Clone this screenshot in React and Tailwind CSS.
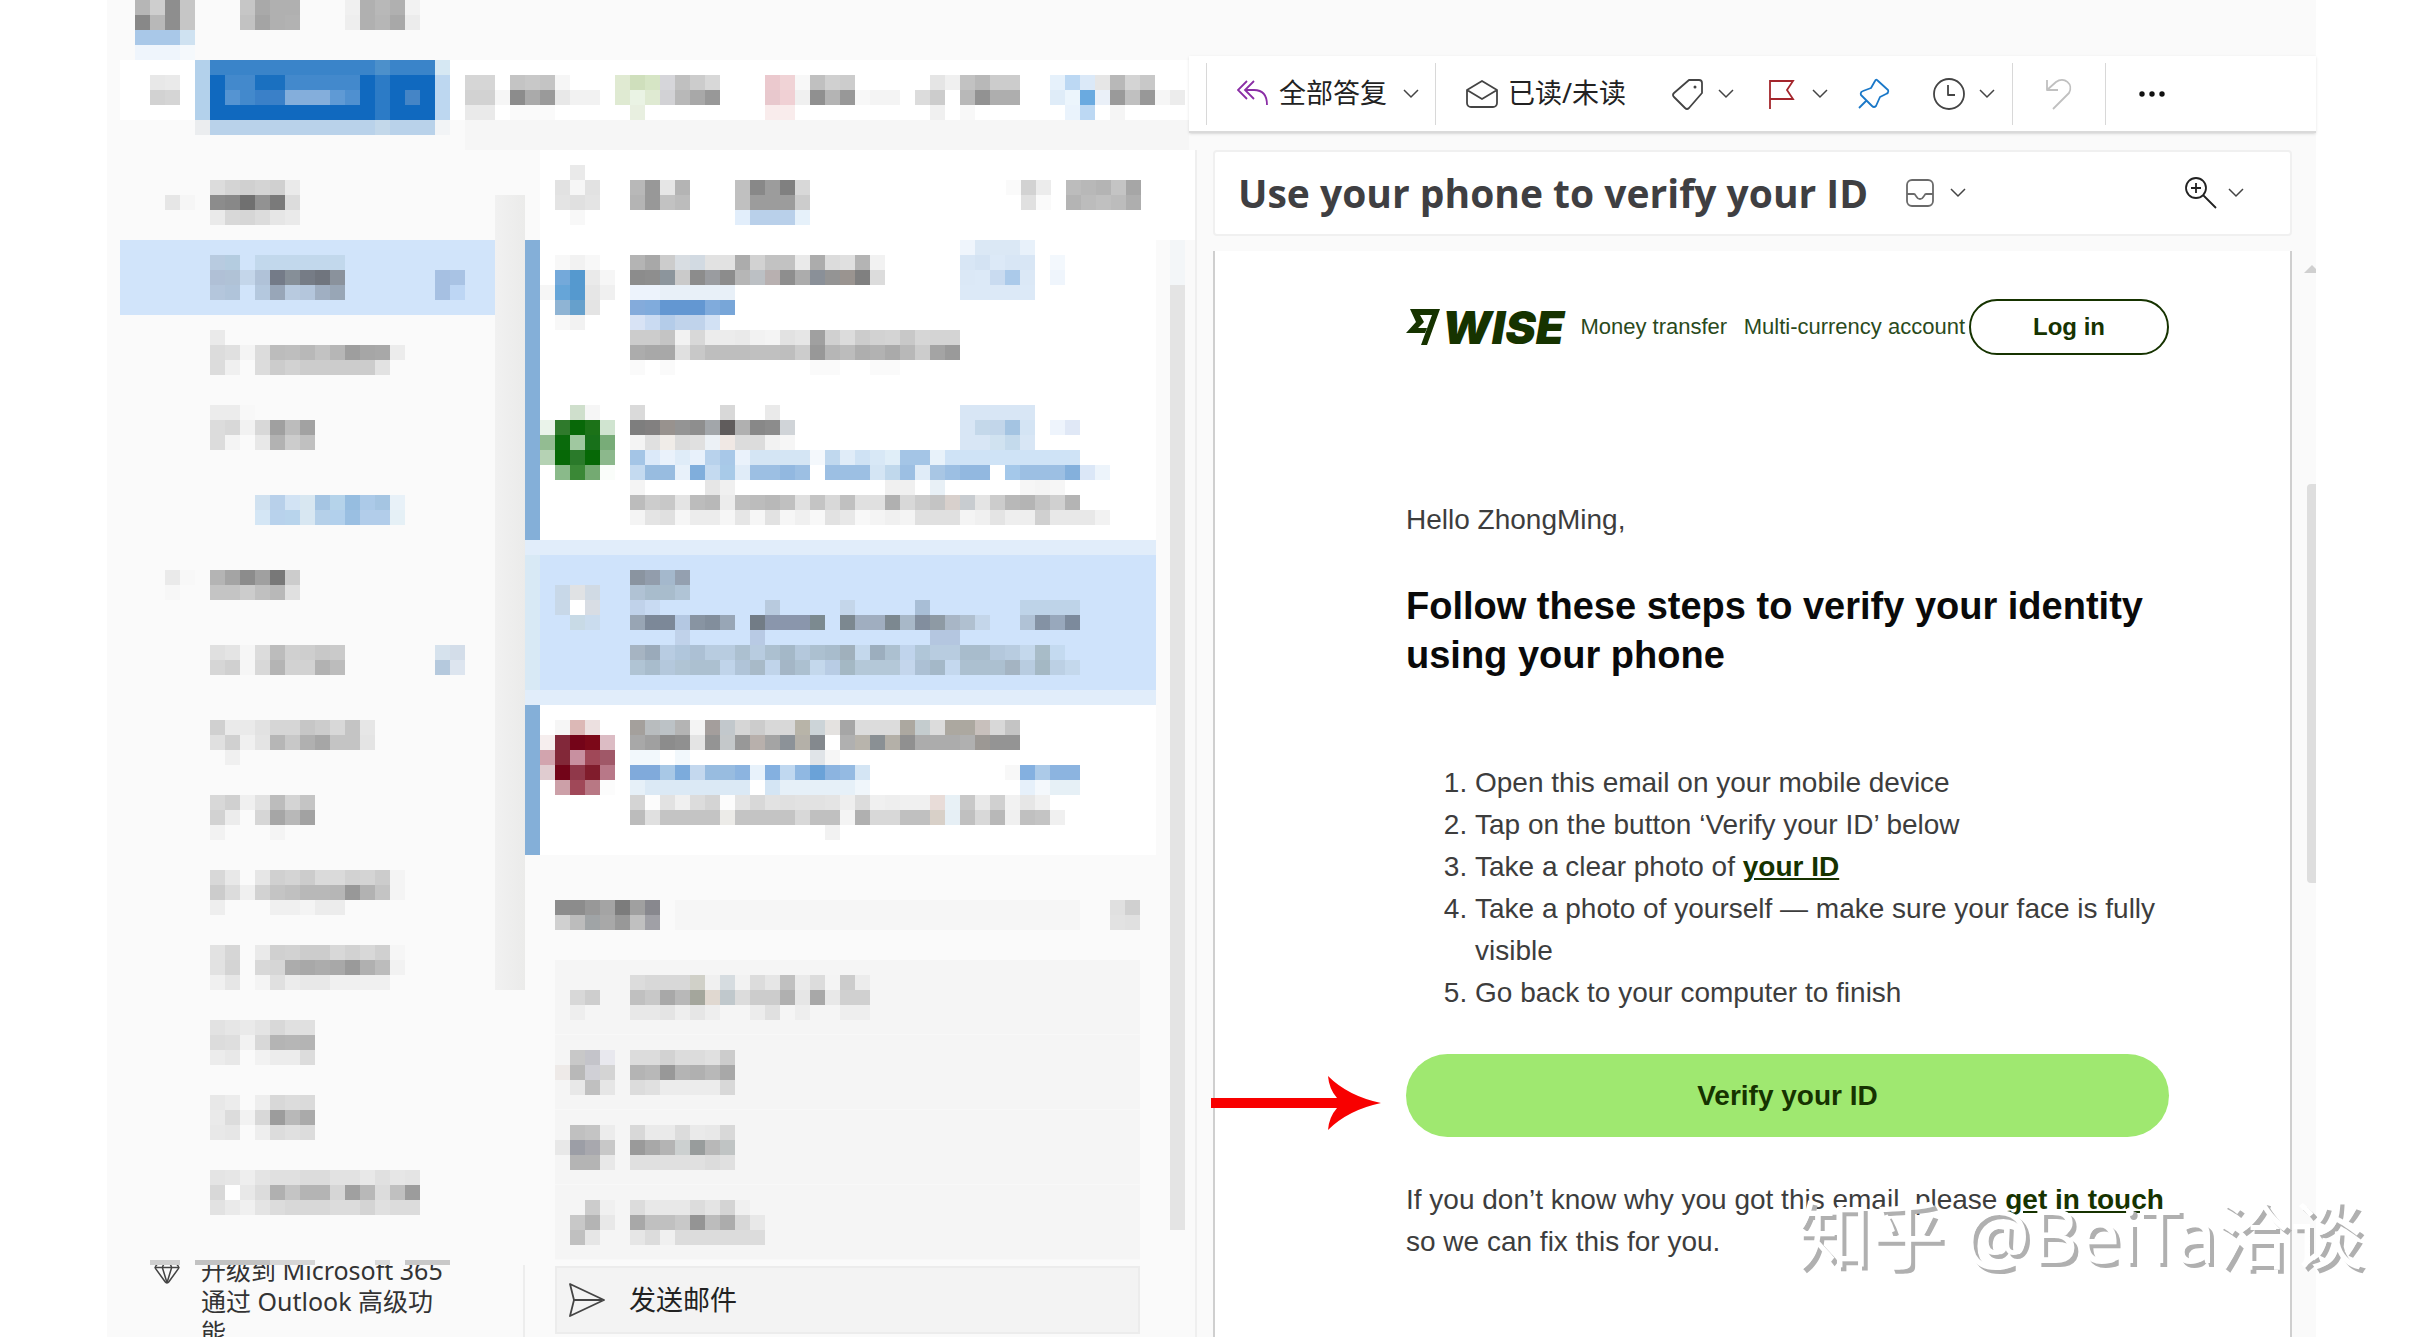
import React from 'react'
import { Gem } from 'lucide-react'

const CELL = 15

// Each row is a list of cells: "." is empty, two hex digits are a grey, six are a colour, "*n" repeats.
function parseRow(row) {
  return row
    .split(' ')
    .filter(Boolean)
    .flatMap((token) => {
      const [value, times] = token.split('*')
      return Array(Number(times || 1)).fill(value)
    })
}

function toColor(value) {
  return value.length === 2 ? `#${value}${value}${value}` : `#${value}`
}

function Mosaic({ rows, className = '' }) {
  const grid = rows.map(parseRow)
  const cols = Math.max(...grid.map((r) => r.length))
  return (
    <svg
      className={`shrink-0 ${className}`}
      width={cols * CELL}
      height={rows.length * CELL}
      shapeRendering="crispEdges"
      aria-hidden="true"
    >
      {grid.map((row, y) =>
        row.map((value, x) =>
          value === '.' ? null : (
            <rect key={`${x}-${y}`} x={x * CELL} y={y * CELL} width={CELL} height={CELL} fill={toColor(value)} />
          )
        )
      )}
    </svg>
  )
}

const tabs = [
  ['b6 ce 8e c6', '88 b8 8e c6', 'a9c8e8*3 cfe2f1', 'eff5fc*3 f5f9fc'],
  ['c6 a9 b0 b0', 'c2 a4 b0 b2'],
  ['f0 b0 b8 b0 f2', 'ee b0 b6 a8 ec'],
]

const newMail = [
  'b3d1eb 3a84c9*11 4c90cb 3a84c9*3 d6e8f3',
  'b3d1eb 1069bf 4389cc*2 1a70c0*2 4389cc*5 1069bf 2c7bc6 1069bf*3 bdd7f0',
  'b3d1eb 1069bf 5594d2 4389cc 3a80c8*2 84aedb*3 5f9ad5 4f90d0 1069bf 2c7bc6 1069bf 4585c6 1069bf bdd7f0',
  'b3d1eb 1069bf*11 2c7bc6 1069bf*3 bdd7f0',
  'ebedef b9d2ea*11 c3d8ea b9d2ea*3 f2f4f6',
]

const ribbon = [
  ['.*10', 'd6 d6 . c4 c8 c4 f6', 'd2 d2 f6 8c aa 9a e8 f2 f2', 'ea ea . fa fa fa'],
  ['.*10', 'e0ead2 cfdfbc d6e5c5 d6d6da c0 cc d8', 'dfead2 eaf3e4 dfead2 d2d2d5 b8 a8 98', '. e8efe0'],
  ['.*10', 'ebc9ce f0d3d6 f8 c0 d0 cc', 'e8c8cd f0d0d4 f0 90 b4 98 f8 f4 f4', 'f9ecec*2'],
  ['.*9', '. e5 f0 c2 b8 cc cc', 'dc cc . b8 92 ae ae', '. f0 . f8'],
  ['.*9', 'e6f1fb bcd8f3 dbe9f8 e6 b8 d4 c8', 'dfecf8 ecf5fc 6aaae0 eaf0f8 9a c0 98 f6 ec', '. eaf3fc bcd8f3 . f5'],
]

const folders = [
  { rows: ['.', '.*3 dc d4 d0 d4 d0 ea', 'e6 f6 . 8c 88 70 92 7a dc', '.*3 ea d8 d6 dc e6 ea'] },
  {
    selected: true,
    rows: [
      '.',
      '.*3 b8cbe0 b4cce0 . c2d8ec*6',
      '.*3 b0c0d6 b0c2d6 c4d6ea b0c2d8 747b88 868f98 767c86 70757e 8a929c .*6 a6c0e2 a9c3e4',
      '.*3 b4c6dc b0c4da . b4c8de 98a6b8 b8cadf b4c6dc a0afc2 98a6b6 .*6 a6c0e2 bdd6f4',
    ],
  },
  { rows: ['.', '.*3 ea', '.*3 dc e0 f4 dc bc be b8 c2 b6 9e a6 a8 ec', '.*3 dc f0 . dc cc d2 cc*5 e2'] },
  { rows: ['.', '.*3 ec ec f8', '.*3 dc d8 f2 d8 a0 bc a2', '.*3 dc f4 . e8 b2 cc c0'] },
  {
    rows: [
      '.',
      '.',
      '.*6 d0e1f0 b8d0ea d2e3f4 d8e7f1 a5c5e3 b5d3ea 96bde0 accae8 a5c5e2 e8f1f8',
      '.*6 d4e6f5 b8d2ec b8d4ec d8e7f2 b5d0e9 b2d0ec 9abfe2 b2cdea*2 e5f0f6',
    ],
  },
  { rows: ['.', '.', 'ea f8 . b4 a4 8c a0 78 cc', 'f7 . . c4 c4 cc c0 b8 e0'] },
  {
    rows: [
      '.',
      '.',
      '.*3 e0 e4 f6 dc bc d0 ce c8 ca .*6 d6e2ed d3dde9',
      '.*3 d6 d0 f6 d8 b4 d2 d2 b2 bc .*6 b5c9dd dde5ef',
    ],
  },
  { rows: ['.', '.', '.*3 d0 ea ea e2 d6 d6 c6 cc d8 c4 e6', '.*3 e0 d0 f0 e4 b6 c8 b0 a6 c4 c4 e4', '.*4 f0'] },
  { rows: ['.', '.', '.*3 d8 d0 f0 e2 bc d4 c4', '.*3 d2 ec . d6 a6 b8 a2', '.*3 f2 .*3 f4'] },
  {
    rows: [
      '.',
      '.',
      '.*3 d8 e8 . e6 d0 d4 cc da da d2 d4 cc f4',
      '.*3 cc dc f0 d2 c4 c0 b8 b8 b6 98 b2 c4 f4',
      '.*3 ee .*3 f0 f0 f4 ec ec',
    ],
  },
  {
    rows: [
      '.',
      '.',
      '.*3 e2 d6 . ea d0 d2 cc cc d8 d2 d8 d0 f6',
      '.*3 e2 d4 . d8 d6 ac a8 ac a8 9a b0 bc f2',
      '.*3 f0 e6 . f4 e0 ec e8*2 f0*4',
    ],
  },
  { rows: ['.', '.', '.*3 e2 e6 ea e4 d8 e0 e0', '.*3 dc de f2 d8 b4 b6 b4', '.*3 ec e8 . f2 ec ec dc'] },
  { rows: ['.', '.', '.*3 e8 ec . ee d8 dc da', '.*3 ea dc f2 d8 9c b8 aa', '.*3 e8 e6 . ee dc e0 dc'] },
  {
    rows: [
      '.',
      '.',
      '.*3 e4 e6 ee e4 e0 e0 dc dc e2 e2 e8 e0 e6 e4',
      '.*3 d8 fe e8 dc b0 c4 b4 b4 d6 a0 b8 dc c0 9c',
      '.*3 e2 ea f0 e4 dc d8*3 dc dc d4 e0 dc dc',
    ],
  },
]

const messages = [
  {
    avatar: [
      '.*5',
      '. f8 f2 f8',
      '. 74a9da 5599cf ea f6',
      'f6 66a5d8 5599cf e6 f0',
      '. 8fb4d4 66a0cc e4',
      '. f8 f2',
    ],
    body: [
      '.*22 eff5fc dbe8f5*3 e8f1fa',
      'b4 a8 cc d8dde2 d2dae2 e2 e2 ac d2 c2 c2 ea ac dc e0 b4 f2 .*5 d8e6f5 d4e3f3 dce9f7 d8e6f5*2 . f3f8fd',
      '8c 8e 8c959c ca 8c 9a9ca0 8c b6 bcc0c4 b8b0b0 8e ac 8a9098 94 9a9490 80 dc .*5 dbe8f6 dce9f7 c9dbf0 abcaea dbe8f6 . eff5fc',
      'edf3fc*2 e8f0f8*5 .*15 dce9f7*5',
      '84abdb 80abdc 6397d2*3 80abdc 78a6d8',
      'd8e3f5 cadbf2 b4cce9 c0d3eb*2 d2e1f4',
      'cc cc c4 f2 d8 ec ec ea f2 f4 e2 e6 a0 d0 dc cc d2 d4 c8 d6 d4 d4',
      'ac a8 a8 e0 c8 be be be c0 c0 be cc 98 b6 bc ae b2 aa b8 cc a4 9a',
      'fa . fa .*9 fa fa . . fa fa',
    ],
  },
  {
    avatar: [
      '.*5',
      '. . cfdfcc f6',
      'eaf3ea 2f7a2c 086808 1c7218 d0e4d0',
      '93bc92 0a6a0c a0c8a0 18701a 78ac78',
      'b5d2b4 066806 2a7a2a 066806 8cb88c',
      '. 8aba8a 3a8836 74aa72 fafdfa',
    ],
    body: [
      '.',
      'da .*5 d8 .*2 ea .*12 d8e6f5*5',
      '7e 828080 98928e 949494 8e8e8e a2a6aa 605c5c b0 88 8c d0d4d8 .*11 d8e6f5 c4d8ea c2d6ea a4c4e2 d4e4f4 . eef4fc e0e8f6',
      'f4 e0 f0ece8 dc e0 ecf1f6 f0e8e4 dc*2 f2 f6 .*11 d8e6f5*2 d0e2f0 c4daec d8e6f5',
      'a4c5e6 dbe9f9 eaf2fb dfecf8 e8f1fb b8d2ec a8c8e8 eaf2fb d4e5f4*4 f4f8fc c0d8ee e0ecf8 cfe2f4 d8e8f6 e0eef8 a4c5e6*2 e8f2fa cfe3f6*9',
      'c4daf0 98bce0*2 e8f1fa 80aedc c4daf0 a8cae8 e0ecf8 9cbfe3*2 92b8e0 9cbfe3 . 9cbfe3*3 d4e5f4 c0d8ec 9cbfe3 e0ecf8 a8c6e4 9cbfe3 92b8e0*2 . a4c8ea 9cbfe3*3 84b0dc dbe7f7 edf4fb',
      'f4 .*4 e6 f0 .*10 f0*2 . e8f0f6 .*5 f6 f4 f6',
      'bc cc c8 e4 bc b8 ec c0 bc b8 c0 e0 c4 d8 c0 e0 e0 b0 d8 cc c4 d8d0cc c8ccd0 e4 cc b8 b4 c4 d0 b4',
      'f4 e4 e0 f6 ec ec f6 e6 f6 e2 f6 f0 f8 e2 e8 f8 f4 f0 f4 e0*3 f4 f0 e4 ee ee d0 e8 e8 e8 f2',
    ],
  },
  {
    selected: true,
    avatar: ['.*5', '.', '.', '. c8d8e8 e0e2e4 d0dae4', '. c8d8e8 ffffff d8dde4', '. . c8dae6 cadcee'],
    body: [
      '.',
      '.',
      '8a94a0 929dac a4b8cc 94a0b0',
      'b0c2d4 a8bccc*2 b0c4d6',
      'c0d2ea c8daf2 .*7 b8cade .*4 c4d6ea .*4 a8bed6 .*6 bed3e8*4',
      '98a5b4 7c8898*2 b4c8e2 8894a2 828e9c 98a6b6 . 727c86 8a96ac*3 7c8a90 . 7c8890 a0aec0*2 7c8890 a8b8c8 828e9e 8e9aa4 a8b6c6 b0c0d0 c4d6ea .*2 b0c2d6 8492a4 98a8bc 7c8a9c',
      '.*3 c0d2ea .*4 b8cae4 .*11 b4c6e0*2',
      'a6b4c2 9aaaba b8cce2 b0c6dc acc0d4 b8cce0 b8cce0 acc0d0 b8cce0 acc0d0 a4b8c8 b4c8dc acc0d0 a8bccc a0b0bc c4d8ec 9caebe acc0d0 c0d4ec b0c6d8 b8cce0 b8cce0 a8bccc*2 b4c8dc b8cce0 c4d8ec a8bcc8 c4daf0',
      'b0c4d4 a8bccc b4c8dc b0c4d4 acc0d0*2 c0d4ea b0c4d8 a8bac8 c0d4ea a4b6c6 acc0d0 c4d8ec b8cce4 a4b8c4 b4c8d8*3 c4d6ec acc0d4 a4b8c8 c4d8ee acc0d0*3 a4b4c2 b8cce0 a4b8c4 bcd0e4 c4d8ec',
    ],
  },
  {
    avatar: [
      '.*5',
      '. f6 dcb8b6 ece0e0',
      'f6eeee 82283a 740418 7c0818 dcbcc4',
      'd2a4ae 822838 c890a0 a04858 a05868',
      'e0ccd0 720418 90384a 801c2c b87888',
      '. cca0a8 a04858 b87884 fc',
    ],
    body: [
      '.',
      'a4a09c b8bcbe bcc2c6 b4 f4 a49e9c c2c8cc d6 cc d8*2 b8b4a8 ccd4d8 e4e2e0 a6 dc*3 aca8a0 c4ccce dc aca8a0*2 c8c0bc d8 c4',
      'a8 a0 8c 90 e4 94 c4c8ca 98 b8b0ac a4 8c9298 b4b0a8 84898e . b0 b8b4ac 8a9094 b4b0a8 90 ac*3 b0 9c9894 94*2',
      'f2f8fc*2 . f2f8fc .*8 e0e4e8 f6',
      '80aadb*2 a8c8e6 7cabdc c4d8ee 98bce0*2 8cb4e0 e8f2fb 84b0e0 c0d8f0 90b8e2 6aa2d8 8cb4e0 94bae2 d4e5f4 .*9 f8 84b0e0 accae8 8cb4e0*2',
      'e6f0f8 dbe9f5*7 . d4e5f4 e6f0f8*5 f0f6fb .*10 e6f0fa f4f8fc e6f0f6*2',
      'd4 fc e2 f0 dc d4 fc e4 d8 e2 e0 e2*2 e4 ee dc f0 ee f0 f0 e8dcd8 e8f1f6 c8 e8 d0 f2 e6 f0',
      'bc e0 c4*4 ecebe8 c4*4 d8 c0*2 f4 b0 d8*2 c0*2 d8d0c8 e6eff5 c0 d8 b8 f0 c0 c4 f0',
      '.*13 f2',
    ],
  },
]

const tips = [
  [
    '.',
    '.*5 dc d8*3 d0d0c8 f0 d6dce0 f2 dc e6 c0 ea dc f4 cc ec',
    '. d8 ce .*2 c0 c8 a8 b8 a4a69c e0d8d0 c0c8cc dc cc cc b0 e6 a8 e8 d0 d0',
    '. ee .*3 e8 e8 e4 ee e6 ee .*2 ec e0 . ee .*2 ee ee',
  ],
  [
    '.',
    '. c8 c4c4ca e8e8ee . dc dc d2 dc dc e0 cc',
    'eeeae8 b8 d0d0d6 d4 . b4 b8 98 b4 b0 b8 a8',
    '. e8 c0 e6 . dc e0 ec*4 d8',
  ],
  [
    '.',
    '. c0 c4 ec . d8 ea ea dc ea e8 d8',
    'e8 9c9ea6 a8a8ae c8 . 9a a8 b4 ccd0d0 989c9c b8 c0c4c4',
    '. b4 b4 e8 . e0*5 dc e0',
  ],
  [
    '.',
    '. . cc f0 . dc e8*3 dc e4 d4 f0',
    '. c8 b4 e8 . a8 c0 c0 c8 94 bc ac d8 e8',
    '. c0 e6 . . e6 dc f0 dc*6',
  ],
]

function Chevron() {
  return (
    <svg className="shrink-0" width="16" height="10" viewBox="0 0 16 10" fill="none" stroke="#444" strokeWidth="1.5">
      <path d="M1 1l7 7 7-7" />
    </svg>
  )
}

function Icon({ children, color = '#444', width = 32, height = 32 }) {
  return (
    <svg
      className="shrink-0"
      width={width}
      height={height}
      viewBox={`0 0 ${width} ${height}`}
      fill="none"
      stroke={color}
      strokeWidth="1.8"
      strokeLinejoin="round"
    >
      {children}
    </svg>
  )
}

function Divider() {
  return <div className="h-[62px] w-px shrink-0 bg-[#d8d8d8]" />
}

function Toolbar() {
  return (
    <div className="flex h-[77px] min-w-0 flex-1 items-center border-b-2 border-[#dadada] bg-white pl-[17px] text-[27px] text-[#222] shadow-sm">
      <Divider />
      <button className="ml-[30px] flex items-center">
        <Icon color="#8a2da5">
          <path d="M10 3L1 12l9 9M17 3l-9 9 9 9M8 12h9c8 0 13 5 13 15" strokeLinejoin="miter" />
        </Icon>
        <span className="ml-[10px] mr-4">全部答复</span>
        <Chevron />
      </button>
      <div className="ml-4">
        <Divider />
      </div>
      <button className="ml-[30px] flex items-center">
        <Icon>
          <path d="M1 12L16 3l15 9v13a4 4 0 0 1-4 4H5a4 4 0 0 1-4-4zM1 12l15 9 15-9" />
        </Icon>
        <span className="ml-[10px]">已读/未读</span>
      </button>
      <button aria-label="标记" className="ml-[46px] flex items-center gap-[14px]">
        <Icon>
          <path d="M17 2h10a3 3 0 0 1 3 3v10L17 30q-2 2-4 0L2 19q-2-2 0-4z" />
          <circle cx="23" cy="9" r="1.5" fill="#444" stroke="none" />
        </Icon>
        <Chevron />
      </button>
      <button aria-label="旗标" className="ml-8 flex items-center gap-[14px]">
        <Icon color="#a4262c">
          <path d="M4 31V3h23l-6 9 6 9H4" strokeLinejoin="miter" />
        </Icon>
        <Chevron />
      </button>
      <button aria-label="固定" className="ml-[30px]">
        <Icon color="#1a78c8">
          <path d="M19 2l11 10q1 3-2 4l-6 3-4 9q-2 2-4 0L3 17q-1-3 2-4l8-3 4-7q1-2 2-1zM9 22l-8 8" />
        </Icon>
      </button>
      <button aria-label="推迟" className="ml-[43px] flex items-center gap-[14px]">
        <Icon>
          <circle cx="16" cy="16" r="15" />
          <path d="M15 7v10h7" />
        </Icon>
        <Chevron />
      </button>
      <div className="ml-[17px]">
        <Divider />
      </div>
      <button aria-label="撤消" className="ml-[31px]">
        <Icon color="#c0c0c0">
          <path d="M3 2v10h11M3 12l9-8c8-6 18 2 13 11L9 31" />
        </Icon>
      </button>
      <div className="ml-[29px]">
        <Divider />
      </div>
      <button aria-label="更多" className="ml-[33px]">
        <svg width="26" height="6" viewBox="0 0 26 6" fill="#111">
          <circle cx="3" cy="3" r="2.7" />
          <circle cx="13" cy="3" r="2.7" />
          <circle cx="23" cy="3" r="2.7" />
        </svg>
      </button>
    </div>
  )
}

function Sidebar() {
  return (
    <aside className="flex w-[418px] shrink-0 flex-col">
      <div className="flex pt-[15px]">
        <nav className="flex-1 pl-[13px]">
          {folders.map((folder, i) => (
            <div
              key={i}
              className={folder.selected ? 'h-[75px] bg-[#d1e4fa] pl-[45px]' : 'h-[75px] pl-[45px]'}
            >
              <Mosaic rows={folder.rows} />
            </div>
          ))}
        </nav>
        <div className="w-[30px] pt-[30px]">
          <div className="h-[795px] bg-gradient-to-r from-[#f1f1f1] to-[#ebebea]" />
        </div>
      </div>
      <div className="mt-[45px] flex h-[5px] shrink-0 gap-[15px] pl-[43px]">
        <div className="w-[30px] bg-[#cfcfcf]" />
        <div className="w-[75px] bg-[#c2c2c2]" />
        <div className="-ml-[15px] w-[45px] bg-[#d6d6d6]" />
        <div className="ml-[45px] w-[15px] bg-[#dadada]" />
        <div className="w-[45px] bg-[#c8c8c8]" />
      </div>
      <div className="flex flex-1 items-start overflow-hidden border-r-2 border-[#ededed] pl-[46px]">
        <Gem className="-mt-2 shrink-0 text-[#444]" size={28} strokeWidth={1.3} />
        <a href="#upgrade" className="-mt-[10px] ml-5 w-[248px] text-[25px] leading-[31px] text-[#333]">
          升级到 Microsoft 365 通过 Outlook 高级功能
        </a>
      </div>
    </aside>
  )
}

function Message({ message }) {
  if (message.selected) {
    return (
      <li className="flex h-[165px] border-y-[15px] border-[#e1edfa] bg-[#cfe3fb]">
        <div className="w-[15px] shrink-0 bg-[#d8e9f5]" />
        <Mosaic rows={message.avatar} className="-mt-[15px]" />
        <Mosaic rows={message.body} className="-mt-[15px] ml-[15px]" />
      </li>
    )
  }
  return (
    <li className="flex h-[150px] bg-white">
      <div className="w-[15px] shrink-0 bg-[#84afd8]" />
      <Mosaic rows={message.avatar} />
      <Mosaic rows={message.body} className="ml-[15px]" />
    </li>
  )
}

function MessageList() {
  return (
    <section className="flex w-[672px] shrink-0 flex-col border-r-2 border-[#efefef]">
      <header className="ml-[15px] flex h-[90px] shrink-0 items-start bg-white pl-[15px] pr-[54px] pt-[15px]">
        <Mosaic rows={['. ea', 'e2 f6 e2', 'e4 e0 e4', '. f8']} />
        <Mosaic rows={['.*4', 'b8 98 e6 b4', 'b4 98 c2 bc']} className="ml-[30px]" />
        <Mosaic
          rows={['.*5', 'c0 88 9c 80 d8', 'c0 9c*3 cc', 'e2eefb b9d0ea*3 e6f1fa']}
          className="ml-[45px]"
        />
        <Mosaic rows={['.', 'fa d2 ec . bc b8 b4 c4 a6', '. e0 fa . b4 bc c0 bc ae']} className="ml-auto" />
      </header>
      <div className="flex min-h-0 flex-1">
        <div className="flex-1">
          <ul>
            {messages.map((message, i) => (
              <Message key={i} message={message} />
            ))}
          </ul>
          <div className="pl-[30px] pr-4">
            <div className="flex items-center justify-between py-[45px]">
              <Mosaic rows={['8c*2 98 a4 7c a0 88888e', 'd0 bc a0a4a6 a8 98 c0 a0a0a6']} />
              <div className="ml-[15px] mr-[30px] h-[30px] flex-1 bg-[#f6f6f6]" />
              <Mosaic rows={['e0 d0', 'e2 e0']} />
            </div>
            <div className="mt-[-15px] bg-[#f5f5f5]">
              {tips.map((rows, i) => (
                <div key={i} className="h-[75px] border-b border-[#f8f8f8]">
                  <Mosaic rows={rows} />
                </div>
              ))}
            </div>
            <button className="mt-[6px] flex h-[68px] w-full items-center border-2 border-[#ececec] bg-[#f3f3f3] pl-3 text-[27px] text-[#222]">
              <Icon width={36} height={34}>
                <path d="M1 1l34 16L1 33l4-16zM5 17h28" />
              </Icon>
              <span className="ml-6">发送邮件</span>
            </button>
          </div>
        </div>
        <div className="w-[39px] pl-[14px]">
          <div className="h-[45px] w-[15px] bg-[#f3f6f8]" />
          <div className="h-[945px] w-[15px] bg-[#e4e4e4]" />
        </div>
      </div>
    </section>
  )
}

function WiseLogo() {
  return (
    <a href="#wise" aria-label="Wise" className="flex shrink-0 items-center text-[#163300]">
      <svg width="34" height="36" viewBox="0 0 34 36" fill="#163300">
        <path d="M4 0h30L21 36h-6L26 6H14l4 7-6 6h9l-2 5H0l10-11z" />
      </svg>
      <span className="ml-[2px] font-['Inter','Liberation_Sans',sans-serif] text-[46px] font-black italic leading-9">
        WISE
      </span>
    </a>
  )
}

function Email() {
  return (
    <article className="relative flex-1 border-x-2 border-[#cfcfcf] bg-white pl-[191px] pr-[121px] font-['Liberation_Sans',Arial,sans-serif] text-[28px] leading-[42px] text-[#3d3d3d]">
      <header className="flex items-center pt-12">
        <WiseLogo />
        <nav className="flex flex-1 items-center justify-between whitespace-nowrap pl-4 text-[22px] text-[#2a4a1c]">
          <a href="#transfer">Money transfer</a>
          <a href="#account" className="pr-1">
            Multi-currency account
          </a>
        </nav>
        <a
          href="#login"
          className="flex h-14 w-[200px] shrink-0 items-center justify-center rounded-full border-2 border-[#163300] text-[24px] font-bold text-[#163300]"
        >
          Log in
        </a>
      </header>
      <p className="mt-36">Hello ZhongMing,</p>
      <h2 className="mt-[41px] text-[38px] font-bold leading-[49px] text-[#0a0a0a]">
        Follow these steps to verify your identity using your phone
      </h2>
      <ol className="mt-[82px] list-decimal pl-[69px]">
        <li>Open this email on your mobile device</li>
        <li>Tap on the button ‘Verify your ID’ below</li>
        <li>
          Take a clear photo of{' '}
          <a href="#id" className="font-bold text-[#163300] underline">
            your ID
          </a>
        </li>
        <li>Take a photo of yourself — make sure your face is fully visible</li>
        <li>Go back to your computer to finish</li>
      </ol>
      <div className="relative mt-10">
        <svg
          className="absolute -left-[195px] top-[22px]"
          width="170"
          height="54"
          viewBox="0 0 170 54"
          fill="#f80000"
        >
          <path d="M0 22h126Q118 13 117 0q20 20 53 27-33 7-53 27 1-13 9-22H0z" />
        </svg>
        <a
          href="#verify"
          className="flex h-[83px] items-center justify-center rounded-full bg-[#9fe870] font-bold text-[#163300]"
        >
          Verify your ID
        </a>
      </div>
      <p className="mt-[42px]">
        If you don’t know why you got this email, please{' '}
        <a href="#help" className="font-bold text-[#163300] underline">
          get in touch
        </a>{' '}
        so we can fix this for you.
      </p>
    </article>
  )
}

function ReadingPane() {
  return (
    <main className="ml-4 flex min-w-0 flex-1 flex-col">
      <header className="mr-6 flex h-[86px] shrink-0 items-center rounded border-2 border-[#f0f0f0] bg-white pl-[23px] pr-[46px]">
        <h1 className="font-['Open_Sans','Noto_Sans',sans-serif] text-[39px] font-bold text-[#3f3f42]">
          Use your phone to verify your ID
        </h1>
        <button aria-label="移动" className="ml-[38px] flex items-center gap-4">
          <Icon color="#6a6a6a" width={28} height={28}>
            <rect x="1" y="1" width="26" height="26" rx="5" />
            <path d="M1 15h7c2 0 2 5 6 5s4-5 6-5h7" />
          </Icon>
          <Chevron />
        </button>
        <button aria-label="缩放" className="ml-auto flex items-center gap-[11px]">
          <Icon color="#222">
            <circle cx="11" cy="11" r="10" />
            <path d="M11 6v10M6 11h10M18 18l13 13" />
          </Icon>
          <Chevron />
        </button>
      </header>
      <div className="mt-[15px] flex min-h-0 flex-1">
        <Email />
        <div className="flex w-6 shrink-0 flex-col items-end pt-[14px]">
          <svg width="12" height="8" viewBox="0 0 12 8" fill="#d0d0d0">
            <path d="M0 8l8-8 4 4v4z" />
          </svg>
          <div className="mt-[211px] h-[399px] w-[9px] rounded-l bg-[#dedede]" />
        </div>
      </div>
    </main>
  )
}

function App() {
  return (
    <div className="relative h-screen overflow-hidden bg-white pl-[107px] pr-[110px] font-['Noto_Sans','Noto_Sans_CJK_SC',sans-serif]">
      <div className="flex h-full flex-col bg-[#fafafa]">
        <div className="flex h-14 shrink-0 items-start pl-7">
          <Mosaic rows={tabs[0]} />
          <Mosaic rows={tabs[1]} className="ml-[45px]" />
          <Mosaic rows={tabs[2]} className="ml-[45px]" />
        </div>
        <div className="flex h-[94px] shrink-0 items-start">
          <div className="w-[1082px] shrink-0 pt-1">
            <div className="ml-[13px] flex h-[60px] items-start bg-white pl-[30px]">
              <Mosaic rows={['.*3', 'e8 ea', 'd2 d5']} />
              <button aria-label="新邮件" className="shrink-0">
                <Mosaic rows={newMail} />
              </button>
              <div className="ml-[15px] flex">
                {ribbon.map((rows, i) => (
                  <Mosaic key={i} rows={rows} />
                ))}
              </div>
            </div>
            <div className="ml-[358px] h-[30px] bg-[#f6f6f6]" />
          </div>
          <Toolbar />
        </div>
        <div className="flex min-h-0 flex-1">
          <Sidebar />
          <MessageList />
          <ReadingPane />
        </div>
      </div>
      <div className="pointer-events-none absolute bottom-[52px] right-[62px] whitespace-nowrap text-[74px] leading-[100px] text-white [text-shadow:4px_4px_0_#b0b0b0]">
        知乎 @BeiTa洽谈
      </div>
    </div>
  )
}

export default App
